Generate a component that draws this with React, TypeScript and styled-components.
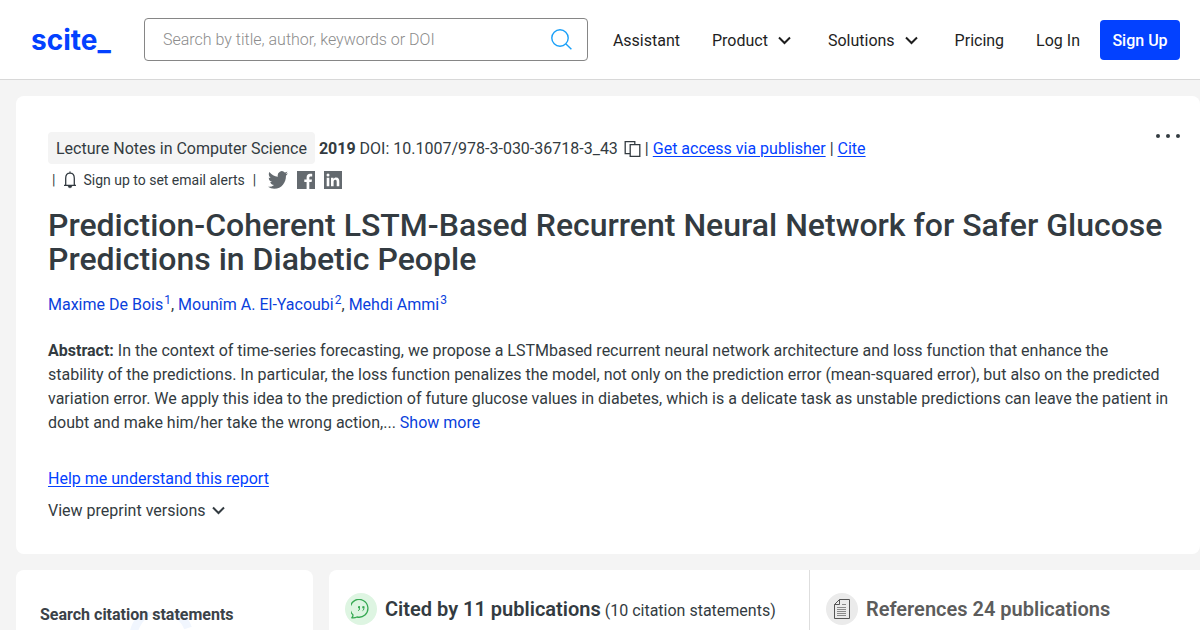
import React from "react";
import styled, { createGlobalStyle, css } from "styled-components";

const GlobalStyle = createGlobalStyle`
  *, *::before, *::after { box-sizing: border-box; }
  body {
    margin: 0;
    background: #f4f4f4;
    color: #333b41;
    font-family: Roboto, "Liberation Sans", sans-serif;
    font-size: 16px;
    line-height: 24px;
  }
`;

const Page = styled.div`
  display: flex;
  flex-direction: column;
  min-height: 100vh;
  overflow-x: hidden;
`;

const Header = styled.header`
  display: flex;
  align-items: center;
  height: 80px;
  padding: 0 20px 0 31px;
  background: #fff;
  border-bottom: 1px solid #d8d8d8;
`;

const Logo = styled.a`
  flex: none;
  width: 113px;
  color: #0341ff;
  font-family: Inter, sans-serif;
  font-size: 28px;
  font-weight: 700;
  line-height: 32px;
  text-decoration: none;
`;

const SearchForm = styled.form`
  display: flex;
  align-items: center;
  flex: 1;
  min-width: 0;
  height: 43px;
  margin-bottom: 1px;
  padding: 0 15px 0 18px;
  border: 1px solid #868686;
  border-radius: 4px;
`;

const SearchInput = styled.input`
  flex: 1;
  min-width: 0;
  padding: 2px 0 0;
  border: 0;
  outline: 0;
  background: none;
  font: inherit;
  font-weight: 300;
  &::placeholder { color: #8c8c8c; opacity: 1; }
`;

const plainButton = css`
  padding: 0;
  border: 0;
  background: none;
  color: inherit;
  font: inherit;
  cursor: pointer;
`;

const IconButton = styled.button`
  ${plainButton}
  display: inline-flex;
  align-items: center;
  align-self: center;
`;

const Nav = styled.nav`
  display: flex;
  align-items: center;
  gap: 32px;
  margin: 2px 20px 0 25px;
  color: #1e1e1e;
`;

const NavLink = styled.a`
  color: inherit;
  text-decoration: none;
  white-space: nowrap;
`;

const NavMenu = styled.button`
  ${plainButton}
  display: flex;
  align-items: center;
  gap: 10px;
  padding-right: 4px;
`;

const SignUp = styled.a`
  flex: none;
  width: 80px;
  height: 40px;
  border-radius: 4px;
  background: #0341ff;
  color: #fff;
  font-weight: 500;
  line-height: 42px;
  text-align: center;
  text-decoration: none;
`;

const Main = styled.main`
  display: flex;
  flex-direction: column;
  flex: 1;
  gap: 16px;
  padding: 16px 0 0 16px;
`;

const Card = styled.section`
  display: flex;
  justify-content: space-between;
  padding: 36px 20px 31px 32px;
  border-radius: 8px;
  background: #fff;
`;

const Paper = styled.article`
  flex: 1;
  min-width: 0;
`;

const MetaRow = styled.div`
  display: flex;
  align-items: baseline;
  gap: 4px;
  height: 32px;
  white-space: nowrap;
`;

const AlertRow = styled(MetaRow)`
  align-items: center;
  gap: 8px;
  padding-left: 4px;
  font-size: 14px;
`;

const Journal = styled.span`
  padding: 5px 8px 3px;
  border-radius: 4px;
  background: #f4f4f4;
`;

const Doi = styled.span`
  display: flex;
  align-items: baseline;
  gap: 6px;
`;

const AlertButton = styled.button`
  ${plainButton}
  display: flex;
  align-items: center;
  gap: 6px;
`;

const Social = styled.div`
  display: flex;
  align-items: center;
  gap: 9px;
  margin-left: 4px;
  color: #646a6f;
`;

const SocialLink = styled.a`
  display: flex;
  color: inherit;
`;

const Link = styled.a<{ $underlined?: boolean }>`
  color: #0341ff;
  text-decoration: ${(p) => (p.$underlined ? "underline" : "none")};
  text-underline-offset: 2px;
  sup {
    margin-left: 1px;
    font-size: 12px;
    line-height: 0;
  }
`;

const DarkLink = styled(Link)`
  color: #0a3fdc;
`;

const Title = styled.h1`
  margin: 12px 0 17px;
  font-size: 32px;
  font-weight: 500;
  line-height: 34px;
`;

const Authors = styled.p`
  margin: 0 0 22px;
`;

const Abstract = styled.p`
  max-width: 1124px;
  margin: 0 0 32px;
`;

const Actions = styled.div`
  display: flex;
  flex-direction: column;
  align-items: flex-start;
  gap: 8px;
`;

const Preprints = styled.button`
  ${plainButton}
  display: flex;
  align-items: center;
  gap: 6px;
`;

const MoreButton = styled.button`
  ${plainButton}
  display: flex;
  flex: none;
  align-self: flex-start;
  width: 24px;
  height: 8px;
  margin-left: -24px;
`;

const Lower = styled.div`
  display: flex;
  flex: 1;
  gap: 16px;
`;

const Sidebar = styled.aside`
  position: relative;
  flex: none;
  width: 297px;
  padding: 33px 24px 0;
  overflow: hidden;
  border-radius: 8px 8px 0 0;
  background: #fff;
`;

const Watermark = styled.svg`
  position: absolute;
  top: 42px;
  left: 112px;
`;

const SidebarTitle = styled.h2`
  position: relative;
  margin: 0;
  font-size: 16px;
  font-weight: 700;
  line-height: 24px;
  color: #3b4248;
`;

const Tabs = styled.div`
  display: flex;
  flex: 1;
  min-width: 0;
  border-radius: 8px 0 0 0;
  background: #fff;
`;

const Tab = styled.button<{ $active?: boolean }>`
  ${plainButton}
  display: flex;
  align-items: flex-start;
  flex: ${(p) => (p.$active ? "0 0 481px" : "1 0 0")};
  gap: 8px;
  padding: 23px 16px 0;
  border-right: ${(p) => (p.$active ? "1px solid #dedede" : "0")};
  color: ${(p) => (p.$active ? "#333b41" : "#5c5c5c")};
  line-height: 32px;
  white-space: nowrap;
`;

const TabTitle = styled.span`
  font-size: 20px;
  font-weight: 600;
`;

const Disc = styled.span<{ $tone: string }>`
  display: flex;
  align-items: center;
  justify-content: center;
  width: 32px;
  height: 32px;
  border-radius: 50%;
  background: ${(p) => p.$tone};
`;

const Chevron = () => (
  <svg width="14" height="10" viewBox="0 0 14 10" fill="none" stroke="currentColor" strokeWidth="2" aria-hidden="true">
    <path d="M1 1.500 6.500 7 12 1.500" />
  </svg>
);

const SearchIcon = () => (
  <svg width="21" height="21" viewBox="0 0 21 21" fill="none" stroke="#1ba0f8" strokeWidth="1.4" aria-hidden="true">
    <circle cx="9" cy="9" r="8.2" />
    <path d="m15 15 5.4 5.2" />
  </svg>
);

const CopyIcon = () => (
  <svg width="17" height="18" viewBox="0 0 17 18" fill="none" stroke="currentColor" strokeWidth="1.3" aria-hidden="true">
    <path d="M6 13.6H1.2V1.7h9.6V4" />
    <path d="M6.2 4.700h9.600v11.600H6.200z" />
  </svg>
);

const BellIcon = () => (
  <svg width="14" height="18" viewBox="0 0 14 18" fill="none" stroke="currentColor" strokeWidth="1.3" aria-hidden="true">
    <path d="M7 .5v1.7M1 14.3h12M2.7 14V7.2C2.7 4.2 4.5 2.200 7 2.200s4.300 2 4.300 5V14" />
    <path d="M5.200 15a1.800 1.800 0 0 0 3.600 0z" fill="currentColor" strokeWidth=".6" />
  </svg>
);

const TwitterIcon = () => (
  <svg width="20" height="18" viewBox="0 2 24 20" preserveAspectRatio="none" fill="currentColor" aria-hidden="true">
    <path d="M23.950 4.570a10 10 0 0 1-2.820.770 4.960 4.960 0 0 0 2.160-2.720c-.950.550-2 .950-3.130 1.180a4.920 4.920 0 0 0-8.380 4.480C7.690 8.090 4.070 6.130 1.640 3.160a4.820 4.820 0 0 0-.670 2.480c0 1.710.870 3.210 2.190 4.100a4.900 4.900 0 0 1-2.230-.620v.060a4.920 4.920 0 0 0 3.950 4.830 5 5 0 0 1-2.210.080 4.940 4.940 0 0 0 4.600 3.420A9.870 9.870 0 0 1 0 19.540a13.990 13.990 0 0 0 7.550 2.210c9.050 0 14-7.500 14-13.980 0-.210 0-.420-.020-.630a9.940 9.940 0 0 0 2.420-2.570z" />
  </svg>
);

const FacebookIcon = () => (
  <svg width="18" height="18" viewBox="0 0 18 18" aria-hidden="true">
    <path fill="currentColor" d="M0 0h18v18H0z" />
    <path fill="#fff" d="M9.600 18v-6.900H7.300V8.400h2.300v-2c0-2.300 1.400-3.600 3.500-3.600 1 0 1.900.1 2.100.1v2.500h-1.500c-1.100 0-1.400.6-1.400 1.400v1.600H15l-.4 2.700h-2.300V18z" />
  </svg>
);

const LinkedInIcon = () => (
  <svg width="18" height="18" viewBox="0 0 18 18" aria-hidden="true">
    <path fill="currentColor" d="M0 0h18v18H0z" />
    <g fill="#fff">
      <circle cx="4" cy="4" r="1.500" />
      <path d="M2.700 6.800h2.600v8.500H2.700zM7 6.800h2.500v1.200c.4-.7 1.300-1.400 2.600-1.400 2.600 0 3.200 1.700 3.200 4v4.700h-2.600v-4.200c0-1 0-2.300-1.400-2.300s-1.700 1.100-1.700 2.200v4.300H7z" />
    </g>
  </svg>
);

const QuoteBubbleIcon = () => (
  <svg width="20" height="20" viewBox="0 0 20 20" fill="none" stroke="#36a852" strokeWidth="1.300" aria-hidden="true">
    <path d="M.8 18.800c1-.8 1.300-1.500 1.100-3A8.900 8.900 0 1 1 6 18c-1.500.8-3.400 1-5.200.8z" strokeLinejoin="round" />
    <path d="M8.500 7.500v2.300c0 1-.4 1.600-1.300 1.900M12.800 7.500v2.300c0 1-.4 1.600-1.300 1.900" strokeWidth="1" />
    <path d="M7 7.300h2v2H7zM11.300 7.300h2v2h-2z" fill="#36a852" stroke="none" />
  </svg>
);

const DocumentIcon = () => (
  <svg width="16" height="20" viewBox="0 0 16 20" fill="none" stroke="#555" strokeWidth="1" aria-hidden="true">
    <path d="M5.500.5h10v19H.5v-14z" />
    <path d="M5.500.5v5h-5" />
    <path d="M8 5.500h4M3 8.500h9M3 10.500h9M3 12.500h9M3 14.500h9M3 16.500h9" stroke="#8a8a8a" />
  </svg>
);

const DotsIcon = () => (
  <svg width="24" height="8" viewBox="0 0 24 8" fill="currentColor" aria-hidden="true">
    <circle cx="2" cy="4" r="2" />
    <circle cx="12" cy="4" r="2" />
    <circle cx="22" cy="4" r="2" />
  </svg>
);

const authors = ["Maxime De Bois", "Mounîm A. El-Yacoubi", "Mehdi Ammi"];

export default function App() {
  return (
    <Page>
      <GlobalStyle />
      <Header>
        <Logo href="#">scite_</Logo>
        <SearchForm role="search">
          <SearchInput type="text" aria-label="Search" placeholder="Search by title, author, keywords or DOI" />
          <IconButton type="submit" aria-label="Submit search">
            <SearchIcon />
          </IconButton>
        </SearchForm>
        <Nav>
          <NavLink href="#">Assistant</NavLink>
          <NavMenu type="button">Product <Chevron /></NavMenu>
          <NavMenu type="button">Solutions <Chevron /></NavMenu>
          <NavLink href="#">Pricing</NavLink>
          <NavLink href="#">Log In</NavLink>
        </Nav>
        <SignUp href="#">Sign Up</SignUp>
      </Header>
      <Main>
        <Card>
          <Paper>
            <MetaRow>
              <Journal>Lecture Notes in Computer Science</Journal>
              <strong>2019</strong>
              <Doi>
                DOI: 10.1007/978-3-030-36718-3_43
                <IconButton type="button" aria-label="Copy DOI"><CopyIcon /></IconButton>
              </Doi>
              <span>|</span>
              <Link $underlined href="#">Get access via publisher</Link>
              <span>|</span>
              <Link $underlined href="#">Cite</Link>
            </MetaRow>
            <AlertRow>
              <span>|</span>
              <AlertButton type="button"><BellIcon />Sign up to set email alerts</AlertButton>
              <span>|</span>
              <Social>
                <SocialLink href="#" aria-label="Share on Twitter"><TwitterIcon /></SocialLink>
                <SocialLink href="#" aria-label="Share on Facebook"><FacebookIcon /></SocialLink>
                <SocialLink href="#" aria-label="Share on LinkedIn"><LinkedInIcon /></SocialLink>
              </Social>
            </AlertRow>
            <Title>
              Prediction-Coherent LSTM-Based Recurrent Neural Network for Safer Glucose Predictions in Diabetic People
            </Title>
            <Authors>
              {authors.map((name, i) => (
                <React.Fragment key={name}>
                  {i > 0 && ", "}
                  <DarkLink href="#">{name}<sup>{i + 1}</sup></DarkLink>
                </React.Fragment>
              ))}
            </Authors>
            <Abstract>
              <strong>Abstract:</strong> In the context of time-series forecasting, we propose a LSTMbased recurrent
              neural network architecture and loss function that enhance the
              <br />
              stability of the predictions. In particular, the loss function penalizes the model, not only on the
              prediction error (mean-squared error), but also on the predicted variation error. We apply this idea to
              the prediction of future glucose values in diabetes, which is a delicate task as unstable predictions can
              leave the patient in doubt and make him/her take the wrong action,...{" "}
              <DarkLink href="#">Show more</DarkLink>
            </Abstract>
            <Actions>
              <Link $underlined href="#">Help me understand this report</Link>
              <Preprints type="button">View preprint versions <Chevron /></Preprints>
            </Actions>
          </Paper>
          <MoreButton type="button" aria-label="More options"><DotsIcon /></MoreButton>
        </Card>
        <Lower>
          <Sidebar>
            <Watermark width="80" height="80" viewBox="0 0 80 80" fill="none" stroke="#f1f6fe" strokeWidth="8" aria-hidden="true">
              <path d="M7 35A28 28 0 0 1 60 16" />
            </Watermark>
            <SidebarTitle>Search citation statements</SidebarTitle>
          </Sidebar>
          <Tabs>
            <Tab $active type="button">
              <Disc $tone="#def5e2"><QuoteBubbleIcon /></Disc>
              <span><TabTitle>Cited by 11 publications</TabTitle> (10 citation statements)</span>
            </Tab>
            <Tab type="button">
              <Disc $tone="#ebebeb"><DocumentIcon /></Disc>
              <TabTitle>References 24 publications</TabTitle>
            </Tab>
          </Tabs>
        </Lower>
      </Main>
    </Page>
  );
}
